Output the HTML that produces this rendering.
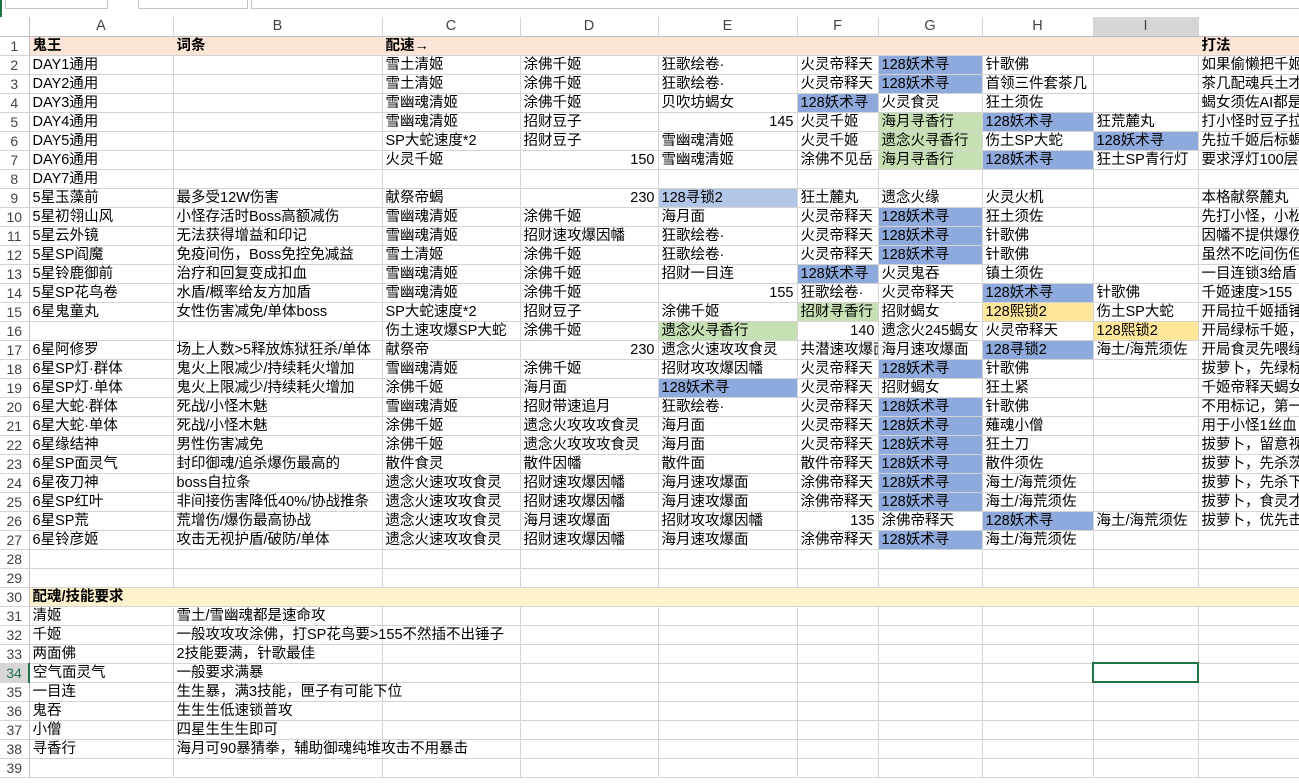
<!DOCTYPE html>
<html><head><meta charset="utf-8"><style>
html,body{margin:0;padding:0;background:#fff;width:1299px;height:783px;overflow:hidden}
body{font-family:"Liberation Sans","Noto Sans CJK SC",sans-serif;font-size:14.5px;color:#000;position:relative}
.tab{position:absolute;top:-1px;height:8px;border:1px solid #c6c6c6;background:#fff}
.gl{position:absolute;left:0;top:0;width:2px;height:40px;background:#217346}
table{position:absolute;left:0;top:17px;border-collapse:collapse;table-layout:fixed;width:1299px}
td{height:19px;padding:0 3px;border-right:1px solid #d4d4d4;border-bottom:1px solid #d4d4d4;white-space:nowrap;overflow:hidden;line-height:18px;box-sizing:border-box}
td.h{background:#fff;color:#444;text-align:center;padding:0;border-right:1px solid #bdbdbd;font-size:14px}
tr.ch td{text-align:center;color:#444;border-bottom:1px solid #bdbdbd;padding:0}
td.sel{background:#d6d6d6;color:#217346;border-bottom:2px solid #217346}
td.rsel{background:#d6d6d6;color:#217346;border-right:2px solid #217346}
.b{background:#8EA9DB}.lb{background:#B4C6E7}.g{background:#C6E0B4}.y{background:#FFE699}
.r{text-align:right}.v{overflow:visible}
tr.p td{background:#FCE4D6;font-weight:bold;border-right-color:#FCE4D6}
tr.p td.h{background:#fff;font-weight:normal;border-right-color:#bdbdbd}
tr.q td{background:#FFF2CC;font-weight:bold;border-right-color:#FFF2CC}
tr.q td.h{background:#fff;font-weight:normal;border-right-color:#bdbdbd}
td.cur{outline:2px solid #217346;outline-offset:-1px}
</style></head><body>
<div class="tab" style="left:5px;width:101px"></div>
<div class="tab" style="left:138px;width:108px"></div>
<div class="tab" style="left:251px;width:1050px"></div>
<div class="gl"></div>
<table>
<colgroup><col style="width:29px"><col style="width:144px"><col style="width:209px"><col style="width:138px"><col style="width:138px"><col style="width:139px"><col style="width:81px"><col style="width:104px"><col style="width:111px"><col style="width:105px"><col style="width:101px"></colgroup>
<tr class="ch"><td class="h" style="background:#fff"></td><td>A</td><td>B</td><td>C</td><td>D</td><td>E</td><td>F</td><td>G</td><td>H</td><td class="sel">I</td><td></td></tr>
<tr class="p"><td class="h">1</td><td>鬼王</td><td>词条</td><td class="v">配速→</td><td></td><td></td><td></td><td></td><td></td><td></td><td>打法</td></tr>
<tr><td class="h">2</td><td>DAY1通用</td><td></td><td>雪土清姬</td><td>涂佛千姬</td><td>狂歌绘卷·</td><td>火灵帝释天</td><td class="b">128妖术寻</td><td>针歌佛</td><td></td><td>如果偷懒把千姬</td></tr>
<tr><td class="h">3</td><td>DAY2通用</td><td></td><td>雪土清姬</td><td>涂佛千姬</td><td>狂歌绘卷·</td><td>火灵帝释天</td><td class="b">128妖术寻</td><td>首领三件套茶几</td><td></td><td>茶几配魂兵土才</td></tr>
<tr><td class="h">4</td><td>DAY3通用</td><td></td><td>雪幽魂清姬</td><td>涂佛千姬</td><td>贝吹坊蝎女</td><td class="b">128妖术寻</td><td>火灵食灵</td><td>狂土须佐</td><td></td><td>蝎女须佐AI都是</td></tr>
<tr><td class="h">5</td><td>DAY4通用</td><td></td><td>雪幽魂清姬</td><td>招财豆子</td><td class="r">145</td><td>火灵千姬</td><td class="g">海月寻香行</td><td class="b">128妖术寻</td><td>狂荒麓丸</td><td>打小怪时豆子拉</td></tr>
<tr><td class="h">6</td><td>DAY5通用</td><td></td><td>SP大蛇速度*2</td><td>招财豆子</td><td>雪幽魂清姬</td><td>火灵千姬</td><td class="g">遗念火寻香行</td><td>伤土SP大蛇</td><td class="b">128妖术寻</td><td>先拉千姬后标蝎</td></tr>
<tr><td class="h">7</td><td>DAY6通用</td><td></td><td>火灵千姬</td><td class="r">150</td><td>雪幽魂清姬</td><td>涂佛不见岳</td><td class="g">海月寻香行</td><td class="b">128妖术寻</td><td>狂土SP青行灯</td><td>要求浮灯100层</td></tr>
<tr><td class="h">8</td><td>DAY7通用</td><td></td><td></td><td></td><td></td><td></td><td></td><td></td><td></td><td></td></tr>
<tr><td class="h">9</td><td>5星玉藻前</td><td>最多受12W伤害</td><td>献祭帝蝎</td><td class="r">230</td><td class="lb">128寻锁2</td><td>狂土麓丸</td><td>遗念火缘</td><td>火灵火机</td><td></td><td>本格献祭麓丸</td></tr>
<tr><td class="h">10</td><td>5星初翎山风</td><td>小怪存活时Boss高额减伤</td><td>雪幽魂清姬</td><td>涂佛千姬</td><td>海月面</td><td>火灵帝释天</td><td class="b">128妖术寻</td><td>狂土须佐</td><td></td><td>先打小怪，小松</td></tr>
<tr><td class="h">11</td><td>5星云外镜</td><td>无法获得增益和印记</td><td>雪幽魂清姬</td><td>招财速攻爆因幡</td><td>狂歌绘卷·</td><td>火灵帝释天</td><td class="b">128妖术寻</td><td>针歌佛</td><td></td><td>因幡不提供爆伤</td></tr>
<tr><td class="h">12</td><td>5星SP阎魔</td><td>免疫间伤，Boss免控免减益</td><td>雪土清姬</td><td>涂佛千姬</td><td>狂歌绘卷·</td><td>火灵帝释天</td><td class="b">128妖术寻</td><td>针歌佛</td><td></td><td>虽然不吃间伤但</td></tr>
<tr><td class="h">13</td><td>5星铃鹿御前</td><td>治疗和回复变成扣血</td><td>雪幽魂清姬</td><td>涂佛千姬</td><td>招财一目连</td><td class="b">128妖术寻</td><td>火灵鬼吞</td><td>镇土须佐</td><td></td><td>一目连锁3给盾</td></tr>
<tr><td class="h">14</td><td>5星SP花鸟卷</td><td>水盾/概率给友方加盾</td><td>雪幽魂清姬</td><td>涂佛千姬</td><td class="r">155</td><td>狂歌绘卷·</td><td>火灵帝释天</td><td class="b">128妖术寻</td><td>针歌佛</td><td>千姬速度&gt;155</td></tr>
<tr><td class="h">15</td><td>6星鬼童丸</td><td>女性伤害减免/单体boss</td><td>SP大蛇速度*2</td><td>招财豆子</td><td>涂佛千姬</td><td class="g">招财寻香行</td><td>招财蝎女</td><td class="y">128熙锁2</td><td>伤土SP大蛇</td><td>开局拉千姬插锤</td></tr>
<tr><td class="h">16</td><td></td><td></td><td>伤土速攻爆SP大蛇</td><td>涂佛千姬</td><td class="g">遗念火寻香行</td><td class="r">140</td><td>遗念火245蝎女</td><td>火灵帝释天</td><td class="y">128熙锁2</td><td>开局绿标千姬，</td></tr>
<tr><td class="h">17</td><td>6星阿修罗</td><td>场上人数&gt;5释放炼狱狂杀/单体</td><td>献祭帝</td><td class="r">230</td><td>遗念火速攻攻食灵</td><td>共潜速攻爆面</td><td>海月速攻爆面</td><td class="b">128寻锁2</td><td>海土/海荒须佐</td><td>开局食灵先喂绿</td></tr>
<tr><td class="h">18</td><td>6星SP灯·群体</td><td>鬼火上限减少/持续耗火增加</td><td>雪幽魂清姬</td><td>涂佛千姬</td><td>招财攻攻爆因幡</td><td>火灵帝释天</td><td class="b">128妖术寻</td><td>针歌佛</td><td></td><td>拔萝卜，先绿标</td></tr>
<tr><td class="h">19</td><td>6星SP灯·单体</td><td>鬼火上限减少/持续耗火增加</td><td>涂佛千姬</td><td>海月面</td><td class="b">128妖术寻</td><td>火灵帝释天</td><td>招财蝎女</td><td>狂土紧</td><td></td><td>千姬帝释天蝎女</td></tr>
<tr><td class="h">20</td><td>6星大蛇·群体</td><td>死战/小怪木魅</td><td>雪幽魂清姬</td><td>招财带速追月</td><td>狂歌绘卷·</td><td>火灵帝释天</td><td class="b">128妖术寻</td><td>针歌佛</td><td></td><td>不用标记，第一</td></tr>
<tr><td class="h">21</td><td>6星大蛇·单体</td><td>死战/小怪木魅</td><td>涂佛千姬</td><td>遗念火攻攻攻食灵</td><td>海月面</td><td>火灵帝释天</td><td class="b">128妖术寻</td><td>薙魂小僧</td><td></td><td>用于小怪1丝血</td></tr>
<tr><td class="h">22</td><td>6星缘结神</td><td>男性伤害减免</td><td>涂佛千姬</td><td>遗念火攻攻攻食灵</td><td>海月面</td><td>火灵帝释天</td><td class="b">128妖术寻</td><td>狂土刀</td><td></td><td>拔萝卜，留意视</td></tr>
<tr><td class="h">23</td><td>6星SP面灵气</td><td>封印御魂/追杀爆伤最高的</td><td>散件食灵</td><td>散件因幡</td><td>散件面</td><td>散件帝释天</td><td class="b">128妖术寻</td><td>散件须佐</td><td></td><td>拔萝卜，先杀茨</td></tr>
<tr><td class="h">24</td><td>6星夜刀神</td><td>boss自拉条</td><td>遗念火速攻攻食灵</td><td>招财速攻爆因幡</td><td>海月速攻爆面</td><td>涂佛帝释天</td><td class="b">128妖术寻</td><td>海土/海荒须佐</td><td></td><td>拔萝卜，先杀下</td></tr>
<tr><td class="h">25</td><td>6星SP红叶</td><td>非间接伤害降低40%/协战推条</td><td>遗念火速攻攻食灵</td><td>招财速攻爆因幡</td><td>海月速攻爆面</td><td>涂佛帝释天</td><td class="b">128妖术寻</td><td>海土/海荒须佐</td><td></td><td>拔萝卜，食灵才</td></tr>
<tr><td class="h">26</td><td>6星SP荒</td><td>荒增伤/爆伤最高协战</td><td>遗念火速攻攻食灵</td><td>海月速攻爆面</td><td>招财攻攻爆因幡</td><td class="r">135</td><td>涂佛帝释天</td><td class="b">128妖术寻</td><td>海土/海荒须佐</td><td>拔萝卜，优先击</td></tr>
<tr><td class="h">27</td><td>6星铃彦姬</td><td>攻击无视护盾/破防/单体</td><td>遗念火速攻攻食灵</td><td>招财速攻爆因幡</td><td>海月速攻爆面</td><td>涂佛帝释天</td><td class="b">128妖术寻</td><td>海土/海荒须佐</td><td></td><td></td></tr>
<tr><td class="h">28</td><td></td><td></td><td></td><td></td><td></td><td></td><td></td><td></td><td></td><td></td></tr>
<tr><td class="h">29</td><td></td><td></td><td></td><td></td><td></td><td></td><td></td><td></td><td></td><td></td></tr>
<tr class="q"><td class="h">30</td><td class="v">配魂/技能要求</td><td></td><td></td><td></td><td></td><td></td><td></td><td></td><td></td><td></td></tr>
<tr><td class="h">31</td><td>清姬</td><td class="v">雪土/雪幽魂都是速命攻</td><td></td><td></td><td></td><td></td><td></td><td></td><td></td><td></td></tr>
<tr><td class="h">32</td><td>千姬</td><td class="v">一般攻攻攻涂佛，打SP花鸟要&gt;155不然插不出锤子</td><td></td><td></td><td></td><td></td><td></td><td></td><td></td><td></td></tr>
<tr><td class="h">33</td><td>两面佛</td><td class="v">2技能要满，针歌最佳</td><td></td><td></td><td></td><td></td><td></td><td></td><td></td><td></td></tr>
<tr><td class="h rsel">34</td><td>空气面灵气</td><td class="v">一般要求满暴</td><td></td><td></td><td></td><td></td><td></td><td></td><td class="cur"></td><td></td></tr>
<tr><td class="h">35</td><td>一目连</td><td class="v">生生暴，满3技能，匣子有可能下位</td><td></td><td></td><td></td><td></td><td></td><td></td><td></td><td></td></tr>
<tr><td class="h">36</td><td>鬼吞</td><td class="v">生生生低速锁普攻</td><td></td><td></td><td></td><td></td><td></td><td></td><td></td><td></td></tr>
<tr><td class="h">37</td><td>小僧</td><td class="v">四星生生生即可</td><td></td><td></td><td></td><td></td><td></td><td></td><td></td><td></td></tr>
<tr><td class="h">38</td><td>寻香行</td><td class="v">海月可90暴猜拳，辅助御魂纯堆攻击不用暴击</td><td></td><td></td><td></td><td></td><td></td><td></td><td></td><td></td></tr>
<tr><td class="h">39</td><td></td><td></td><td></td><td></td><td></td><td></td><td></td><td></td><td></td><td></td></tr>
</table>
</body></html>
